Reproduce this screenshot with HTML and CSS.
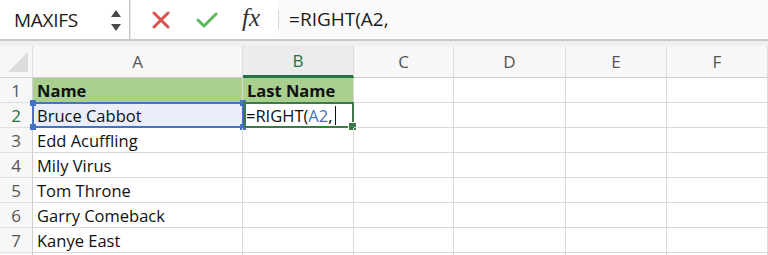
FILE: index.html
```html
<!DOCTYPE html>
<html>
<head>
<meta charset="utf-8">
<link rel="stylesheet" href="styles.css">
</head>
<body>
<div class="app">
  <div class="fbar">
    <div class="namebox">
      <span class="nb-text">MAXIFS</span>
      <span class="spin">
        <svg width="10" height="22" viewBox="0 0 10 22"><path d="M5 0 L10 7 L0 7 Z" fill="#4a4a4a"/><path d="M0 14 L10 14 L5 21 Z" fill="#4a4a4a"/></svg>
      </span>
    </div>
    <div class="btns">
      <svg class="ic-x" width="18" height="18" viewBox="0 0 18 18"><path d="M2 2 L16 16 M16 2 L2 16" stroke="#d9534f" stroke-width="3" stroke-linecap="round"/></svg>
      <svg class="ic-ok" width="22" height="18" viewBox="0 0 22 18"><path d="M2 9 L8 15 L20 3" stroke="#5cb85c" stroke-width="3" fill="none" stroke-linecap="round" stroke-linejoin="round"/></svg>
      <span class="fx">fx</span>
    </div>
    <div class="sep"></div>
    <div class="formula">=RIGHT(A2,</div>
  </div>
  <div class="gap"></div>
  <div class="grid">
    <div class="corner"><svg width="20" height="20" viewBox="0 0 20 20"><path d="M20 0 L20 20 L0 20 Z" fill="#dcdcdc"/></svg></div>
    <div class="ch">A</div>
    <div class="ch sel">B</div>
    <div class="ch">C</div>
    <div class="ch">D</div>
    <div class="ch">E</div>
    <div class="ch">F</div>

    <div class="rh">1</div>
    <div class="c hdr">Name</div>
    <div class="c hdr">Last Name</div>
    <div class="c"></div><div class="c"></div><div class="c"></div><div class="c"></div>

    <div class="rh rsel">2</div>
    <div class="c ref">Bruce Cabbot
      <span class="refbox"><i class="h tl"></i><i class="h tr"></i><i class="h bl"></i><i class="h br"></i></span>
    </div>
    <div class="c edit">=RIGHT(<span class="blue">A2</span>,<span class="caret"></span>
      <span class="editbox"><i class="fill"></i></span>
    </div>
    <div class="c"></div><div class="c"></div><div class="c"></div><div class="c"></div>

    <div class="rh">3</div>
    <div class="c">Edd Acuffling</div>
    <div class="c"></div><div class="c"></div><div class="c"></div><div class="c"></div><div class="c"></div>

    <div class="rh">4</div>
    <div class="c">Mily Virus</div>
    <div class="c"></div><div class="c"></div><div class="c"></div><div class="c"></div><div class="c"></div>

    <div class="rh">5</div>
    <div class="c">Tom Throne</div>
    <div class="c"></div><div class="c"></div><div class="c"></div><div class="c"></div><div class="c"></div>

    <div class="rh">6</div>
    <div class="c">Garry Comeback</div>
    <div class="c"></div><div class="c"></div><div class="c"></div><div class="c"></div><div class="c"></div>

    <div class="rh">7</div>
    <div class="c">Kanye East</div>
    <div class="c"></div><div class="c"></div><div class="c"></div><div class="c"></div><div class="c"></div>

    <div class="rh"></div>
    <div class="c"></div><div class="c"></div><div class="c"></div><div class="c"></div><div class="c"></div><div class="c"></div>
  </div>
</div>
</body>
</html>
```

FILE: styles.css
```css
html, body {
  margin: 0;
  padding: 0;
  background: #ffffff;
}
.app {
  width: 768px;
  height: 255px;
  overflow: hidden;
  font-family: "Open Sans", "Liberation Sans", sans-serif;
  color: #111;
}
.fbar {
  display: flex;
  align-items: stretch;
  height: 41px;
  background: #ffffff;
  border-bottom: 2px solid #c9c9c9;
  box-sizing: border-box;
}
.namebox {
  width: 130px;
  box-sizing: border-box;
  border-right: 1px solid #c4c4c4;
  box-shadow: 1px 0 0 #e6e6e6;
  display: flex;
  align-items: center;
  justify-content: space-between;
  padding: 0 8px 0 14px;
  background: #fff;
}
.nb-text {
  font-size: 19px;
  letter-spacing: -0.3px;
  color: #1a1a1a;
}
.spin {
  display: flex;
  margin-top: 2px;
}
.btns {
  display: flex;
  align-items: center;
  padding-left: 22px;
}
.ic-x { margin-right: 26px; }
.ic-ok { margin-right: 24px; }
.fx {
  font-family: "Liberation Serif", "DejaVu Serif", serif;
  font-style: italic;
  font-size: 25px;
  color: #333;
  margin-top: -3px;
}
.sep {
  width: 1px;
  background: #d6d6d6;
  margin: 10px 0 10px 18px;
}
.formula {
  flex: 1;
  background: #fafafa;
  margin: 0 0 2px 0;
  padding-left: 10px;
  display: flex;
  align-items: center;
  font-size: 19px;
  color: #1a1a1a;
}
.gap {
  height: 5px;
  background: #f0f0f0;
}
.grid {
  display: grid;
  grid-template-columns: 33px 210px 111px 100px 112px 101px 101px;
  grid-template-rows: 32px repeat(8, 25px);
}
.corner, .ch {
  background: #f7f7f7;
  border-right: 1px solid #dedede;
  border-bottom: 1px solid #cfcfcf;
  box-sizing: border-box;
}
.corner {
  display: flex;
  align-items: flex-end;
  justify-content: flex-end;
  padding: 0 4px 5px 0;
}
.ch {
  display: flex;
  align-items: center;
  justify-content: center;
  font-size: 17px;
  color: #555;
}
.ch.sel {
  background: #ececec;
  color: #217346;
  border-bottom: 3px solid #217346;
}
.rh {
  background: #f7f7f7;
  border-right: 1px solid #cfcfcf;
  border-bottom: 1px solid #dedede;
  box-sizing: border-box;
  display: flex;
  align-items: center;
  justify-content: center;
  font-size: 17px;
  color: #555;
}
.rh.rsel {
  color: #217346;
}
.c {
  position: relative;
  border-right: 1px solid #dadada;
  border-bottom: 1px solid #dadada;
  box-sizing: border-box;
  display: flex;
  align-items: center;
  padding-left: 4px;
  font-size: 16.5px;
  white-space: nowrap;
  color: #111;
}
.c.hdr {
  background: #a9d08e;
  font-weight: bold;
}
.c.ref {
  background: #e9eef8;
}
.refbox {
  position: absolute;
  left: -1px;
  top: -1px;
  right: -2px;
  bottom: -1px;
  border: 2px solid #4472c4;
}
.h {
  position: absolute;
  width: 6px;
  height: 6px;
  background: #4472c4;
}
.h.tl { left: -4px; top: -4px; }
.h.tr { right: -4px; top: -4px; }
.h.bl { left: -4px; bottom: -4px; }
.h.br { right: -4px; bottom: -4px; }
.edit {
  padding-left: 3px;
}
.blue { color: #4472c4; }
.caret {
  display: inline-block;
  width: 1px;
  height: 19px;
  background: #111;
  margin-left: 2px;
}
.editbox {
  position: absolute;
  left: 0;
  top: -1px;
  right: -1px;
  bottom: -1px;
  border: 2px solid #3c7a4b;
  border-left-width: 3px;
}
.fill {
  position: absolute;
  right: -5px;
  bottom: -5px;
  width: 7px;
  height: 7px;
  background: #3c7a4b;
  border: 1px solid #fff;
}
```
